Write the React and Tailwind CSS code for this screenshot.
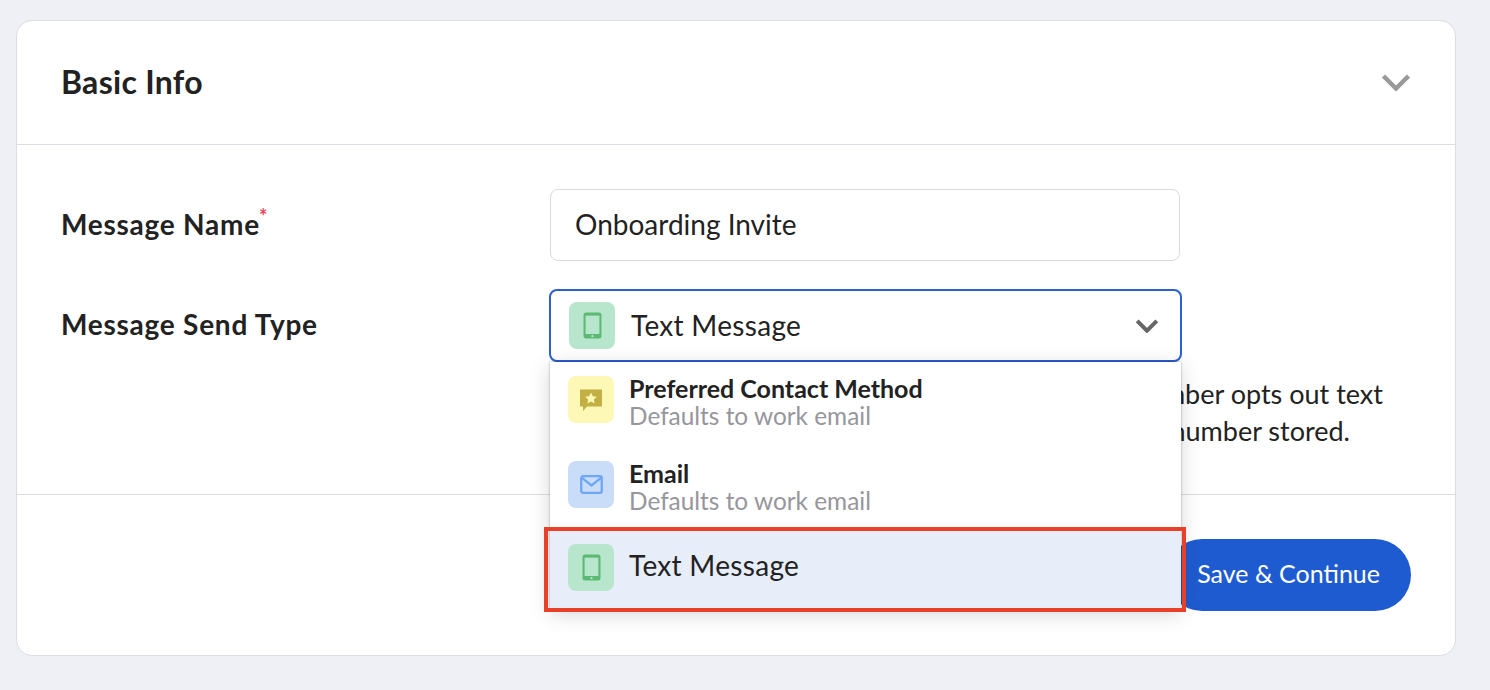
const phoneIcon = (
  <svg width="19" height="27" viewBox="0 0 19 27" fill="none">
    <rect x="0.5" y="0.5" width="18" height="26" rx="2.5" fill="#5cb974" />
    <rect x="2.6" y="3.6" width="13.8" height="18.4" fill="#b8e6cd" />
    <circle cx="9.5" cy="24.2" r="1.1" fill="#b8e6cd" />
  </svg>
);

function IconBox({ bg, children }) {
  return (
    <div className={`flex h-[47px] w-[46px] shrink-0 items-center justify-center rounded-lg ${bg}`}>
      {children}
    </div>
  );
}

function Chevron({ className, strokeWidth }) {
  return (
    <svg className={className} viewBox="0 0 28 17" fill="none">
      <path d="M1.5 2 L14 14.5 L26.5 2" stroke="currentColor" strokeWidth={strokeWidth} />
    </svg>
  );
}

export default function App() {
  return (
    <div className="min-h-screen bg-[#eff0f5] px-4 pt-5 font-['Lato',sans-serif] text-[#222222]">
      <div className="w-[1440px] rounded-2xl border border-[#dcdde3] bg-white">
        {/* header */}
        <div className="flex h-[124px] items-center justify-between border-b border-[#dcdde3] pl-11 pr-[44px]">
          <h1 className="mb-[2px] text-[32px] font-bold tracking-[0.3px]">Basic Info</h1>
          <Chevron className="h-[17px] w-[30px] text-[#999999]" strokeWidth="4.5" />
        </div>

        {/* form */}
        <div className="border-b border-[#dcdde3] pl-11 pt-11">
          <div className="flex items-center">
            <label className="mb-[2px] w-[489px] text-[28px] font-bold tracking-[0.75px]">
              Message Name<span className="relative -top-[11px] -ml-px text-[20px] leading-none text-[#e8485c]">*</span>
            </label>
            <div className="flex h-[72px] w-[630px] items-center rounded-lg border border-[#d9dae0] px-6 pb-[2px] text-[28px]">
              Onboarding Invite
            </div>
          </div>

          <div className="mt-7 flex items-start">
            <label className="flex h-[69px] w-[488px] items-center text-[28px] font-bold tracking-[0.75px]">
              Message Send Type
            </label>
            <div className="relative">
              <div className="flex h-[73px] w-[633px] items-center rounded-lg border-2 border-[#2d5fd0] pl-[18px] pr-[22px] text-[28px] tracking-[0.3px]">
                <IconBox bg="bg-[#b8e6cd]">{phoneIcon}</IconBox>
                <span className="mb-[2px] ml-[16px] flex-1">Text Message</span>
                <Chevron className="h-[14px] w-[22px] text-[#666666]" strokeWidth="5" />
              </div>

              {/* hint sits under the open dropdown */}
              <div className="w-[834px] pb-[45px] pt-[13px] text-right text-[27px] leading-[37px]">
                <p>Email is used instead if the member opts out text</p>
                <p className="pr-[33px]">when there is no valid mobile phone number stored.</p>
              </div>

              <div className="absolute left-px top-[73px] w-[631px] bg-white shadow-[0_0_2px_rgba(0,0,0,0.35),0_4px_20px_rgba(0,0,0,0.16)]">
                <div className="flex h-[84px] items-start gap-[15px] pl-[18px] pt-[14px]">
                  <IconBox bg="bg-[#fdf8b5]">
                    <svg width="24" height="24" viewBox="0 0 24 24">
                      <path d="M1 1.5 H23 V18.5 H8 L4 23 V18.5 H1 Z" fill="#c2b044" />
                      <path d="M12 4.5 L13.8 8.2 L17.8 8.7 L14.9 11.5 L15.6 15.5 L12 13.6 L8.4 15.5 L9.1 11.5 L6.2 8.7 L10.2 8.2 Z" fill="#fdf8b5" />
                    </svg>
                  </IconBox>
                  <div className="-mt-[2px] -ml-px leading-[28px]">
                    <div className="ml-px text-[25px] font-bold">Preferred Contact Method</div>
                    <div className="ml-px text-[24.4px] text-[#96969c]">Defaults to work email</div>
                  </div>
                </div>
                <div className="flex h-[84px] items-start gap-[15px] pl-[18px] pt-[15px]">
                  <IconBox bg="bg-[#c9ddf9]">
                    <svg width="23" height="19" viewBox="0 0 24 20" fill="none">
                      <rect x="1.2" y="1.2" width="21.6" height="17.6" rx="2" stroke="#6ea6f5" strokeWidth="2.4" />
                      <path d="M2 3 L12 11 L22 3" stroke="#6ea6f5" strokeWidth="2.4" />
                    </svg>
                  </IconBox>
                  <div className="-mt-[2px] leading-[28px]">
                    <div className="text-[25px] font-bold">Email</div>
                    <div className="text-[24.4px] text-[#96969c]">Defaults to work email</div>
                  </div>
                </div>
                <div className="flex h-[80px] items-start gap-[15px] bg-[#e7edf9] pl-[18px] pt-[14px] text-[28px] tracking-[0.3px]">
                  <IconBox bg="bg-[#b8e6cd]">{phoneIcon}</IconBox>
                  <span className="leading-[42px]">Text Message</span>
                </div>
                {/* red annotation box */}
                <div className="absolute -bottom-[2px] -left-[6px] -right-[5px] h-[85px] border-[4px] border-[#e9402a]" />
              </div>
            </div>
          </div>
        </div>

        {/* footer */}
        <div className="flex justify-end pb-11 pr-11 pt-11">
          <button className="h-[72px] rounded-full bg-[#1f5bd0] px-[31px] pb-[2px] text-[25px] text-white">Save &amp; Continue</button>
        </div>
      </div>
    </div>
  );
}
